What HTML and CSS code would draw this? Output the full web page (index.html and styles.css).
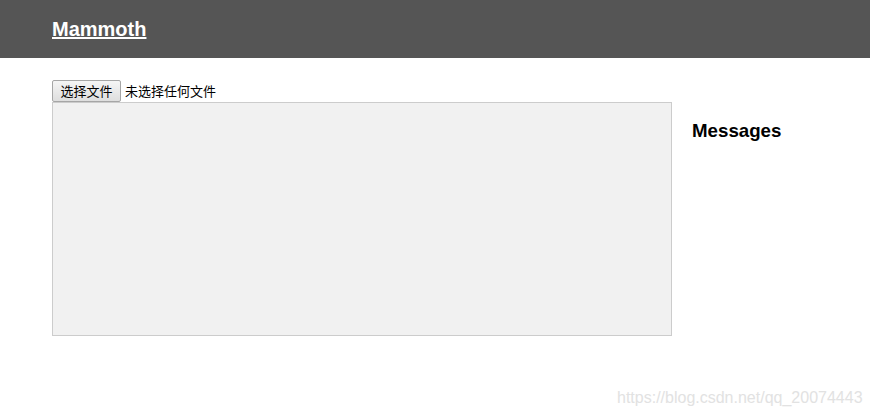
FILE: index.html
```html
<!DOCTYPE html>
<html>
<head>
<meta charset="utf-8">
<link rel="stylesheet" href="styles.css">
</head>
<body>
<header class="topbar">
  <a class="brand" href="#">Mammoth</a>
</header>
<main class="content">
  <section class="editor">
    <div class="file-picker">
      <span class="file-button">选择文件</span>
      <span class="file-status">未选择任何文件</span>
    </div>
    <div class="output"></div>
  </section>
  <aside class="messages">
    <h3 class="messages-title">Messages</h3>
  </aside>
</main>
<div class="watermark">https://blog.csdn.net/qq_20074443</div>
</body>
</html>
```
FILE: styles.css
```css
html, body {
  margin: 0;
  padding: 0;
  background: #fff;
  font-family: "Liberation Sans", Arial, "Noto Sans CJK SC", sans-serif;
}
.topbar {
  height: 58px;
  background: #555555;
  padding-left: 52px;
  box-sizing: border-box;
  padding-top: 18px;
}
.brand {
  color: #fff;
  font-weight: bold;
  font-size: 20px;
  line-height: 23px;
  text-decoration: underline;
  display: inline-block;
}
.content {
  display: flex;
  padding: 22px 0 0 52px;
}
.editor {
  width: 620px;
}
.file-picker {
  display: flex;
  align-items: center;
  height: 22px;
  font-size: 13px;
  font-family: "Liberation Sans", "Noto Sans CJK SC", sans-serif;
}
.file-button {
  box-sizing: border-box;
  width: 69px;
  height: 22px;
  border: 1px solid #a6a6a6;
  border-radius: 2px;
  background: linear-gradient(#f5f5f5, #dedede);
  color: #000;
  display: flex;
  align-items: center;
  justify-content: center;
  line-height: 1;
}
.file-status {
  margin-left: 4px;
  color: #000;
  line-height: 1;
}
.output {
  box-sizing: border-box;
  width: 620px;
  height: 234px;
  border: 1px solid #cccccc;
  background: #f1f1f1;
}
.messages {
  padding-left: 20px;
}
.messages-title {
  margin: 40px 0 0 0;
  font-size: 18.72px;
  font-weight: bold;
  line-height: 22px;
  color: #000;
}
.watermark {
  position: absolute;
  left: 617px;
  top: 388px;
  font-size: 16px;
  line-height: 20px;
  color: #e2e2e2;
  white-space: nowrap;
}
```
